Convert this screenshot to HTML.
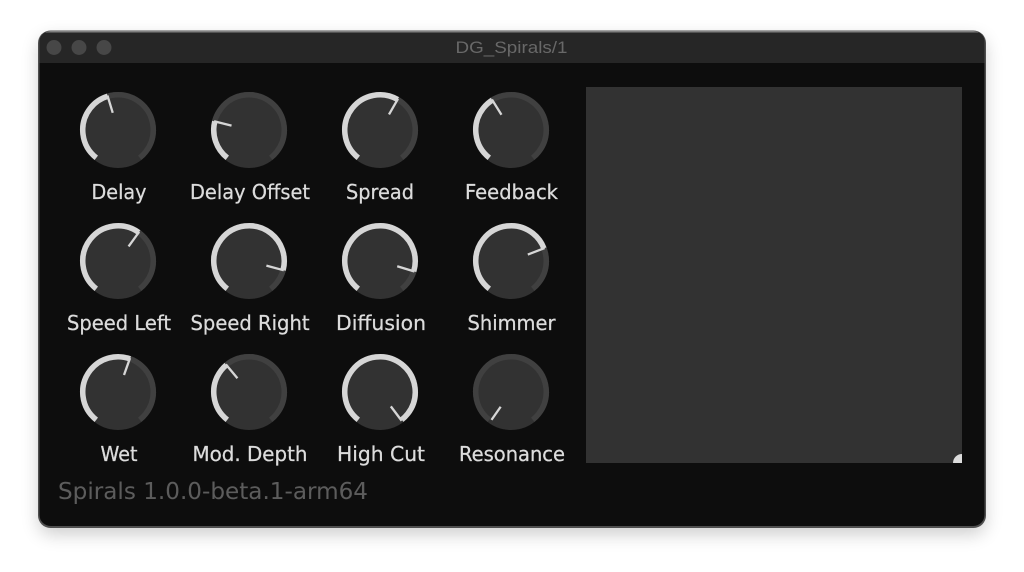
<!DOCTYPE html>
<html>
<head>
<meta charset="utf-8">
<style>
html,body{margin:0;padding:0;background:#fff;width:1024px;height:572px;overflow:hidden}
svg{display:block}
.b{fill:#323232}
.t,.v{fill:none;stroke-width:5.5}
.t{stroke:#404040;stroke-dasharray:284 76}
.v{stroke:#d6d6d6}
.p{stroke:#d6d6d6;stroke-width:2.3}
.l{font-family:"DejaVu Sans",sans-serif;font-size:20px;fill:#dcdcdc;stroke:#dcdcdc;stroke-width:.25;text-anchor:middle}
</style>
</head>
<body>
<svg width="1024" height="572" viewBox="0 0 1024 572" xmlns="http://www.w3.org/2000/svg">
<defs>
<filter id="s" x="-10%" y="-15%" width="120%" height="130%"><feGaussianBlur stdDeviation="9"/></filter>
<filter id="soft" x="-2%" y="-2%" width="104%" height="104%"><feGaussianBlur stdDeviation="0.35"/></filter>
<clipPath id="win"><rect x="39.500" y="31" width="945" height="495" rx="11"/></clipPath>
<clipPath id="panel"><rect x="586" y="87" width="376" height="376"/></clipPath>
</defs>
<rect x="39" y="38" width="946" height="496" rx="12" fill="#000" opacity=".2" filter="url(#s)"/>
<g filter="url(#soft)">
<rect x="38" y="30.500" width="948" height="497.500" rx="12.500" fill="#505050"/>
<g clip-path="url(#win)">
<rect x="39" y="31" width="946" height="496" fill="#111"/>
<rect x="39" y="32" width="946" height="32" fill="#262626"/>
<rect x="39" y="31" width="946" height="1.500" fill="#808080"/>
<rect x="39" y="63" width="946" height="2" fill="#0a0a0a"/>
</g>
<circle cx="54" cy="47.500" r="7.500" fill="#464646"/>
<circle cx="79" cy="47.500" r="7.500" fill="#464646"/>
<circle cx="104" cy="47.500" r="7.500" fill="#464646"/>
<text x="511.500" y="53" font-family="'Liberation Sans',sans-serif" font-size="16.500" fill="#686868" text-anchor="middle" textLength="112" lengthAdjust="spacingAndGlyphs">DG_Spirals/1</text>

<rect x="586" y="87" width="376" height="376" fill="#333"/>
<circle cx="962" cy="463" r="9" fill="#dcdcdc" clip-path="url(#panel)"/>

<g transform="translate(118 130)"><circle class="b" r="38"/><circle class="t" r="35.250" pathLength="360" transform="rotate(-232)"/><circle class="v" r="35.250" pathLength="360" stroke-dasharray="125 360" transform="rotate(-232)"/><line class="p" y1="-36" y2="-18" transform="rotate(-17)"/></g>
<g transform="translate(249 130)"><circle class="b" r="38"/><circle class="t" r="35.250" pathLength="360" transform="rotate(-232)"/><circle class="v" r="35.250" pathLength="360" stroke-dasharray="66 360" transform="rotate(-232)"/><line class="p" y1="-36" y2="-18" transform="rotate(-76)"/></g>
<g transform="translate(380 130)"><circle class="b" r="38"/><circle class="t" r="35.250" pathLength="360" transform="rotate(-232)"/><circle class="v" r="35.250" pathLength="360" stroke-dasharray="172 360" transform="rotate(-232)"/><line class="p" y1="-36" y2="-18" transform="rotate(30)"/></g>
<g transform="translate(511 130)"><circle class="b" r="38"/><circle class="t" r="35.250" pathLength="360" transform="rotate(-232)"/><circle class="v" r="35.250" pathLength="360" stroke-dasharray="110 360" transform="rotate(-232)"/><line class="p" y1="-36" y2="-18" transform="rotate(-32)"/></g>

<g transform="translate(118 261)"><circle class="b" r="38"/><circle class="t" r="35.250" pathLength="360" transform="rotate(-232)"/><circle class="v" r="35.250" pathLength="360" stroke-dasharray="178 360" transform="rotate(-232)"/><line class="p" y1="-36" y2="-18" transform="rotate(36)"/></g>
<g transform="translate(249 261)"><circle class="b" r="38"/><circle class="t" r="35.250" pathLength="360" transform="rotate(-232)"/><circle class="v" r="35.250" pathLength="360" stroke-dasharray="247 360" transform="rotate(-232)"/><line class="p" y1="-36" y2="-18" transform="rotate(105)"/></g>
<g transform="translate(380 261)"><circle class="b" r="38"/><circle class="t" r="35.250" pathLength="360" transform="rotate(-232)"/><circle class="v" r="35.250" pathLength="360" stroke-dasharray="249 360" transform="rotate(-232)"/><line class="p" y1="-36" y2="-18" transform="rotate(107)"/></g>
<g transform="translate(511 261)"><circle class="b" r="38"/><circle class="t" r="35.250" pathLength="360" transform="rotate(-232)"/><circle class="v" r="35.250" pathLength="360" stroke-dasharray="211 360" transform="rotate(-232)"/><line class="p" y1="-36" y2="-18" transform="rotate(69)"/></g>

<g transform="translate(118 392)"><circle class="b" r="38"/><circle class="t" r="35.250" pathLength="360" transform="rotate(-232)"/><circle class="v" r="35.250" pathLength="360" stroke-dasharray="162 360" transform="rotate(-232)"/><line class="p" y1="-36" y2="-18" transform="rotate(19.500)"/></g>
<g transform="translate(249 392)"><circle class="b" r="38"/><circle class="t" r="35.250" pathLength="360" transform="rotate(-232)"/><circle class="v" r="35.250" pathLength="360" stroke-dasharray="102 360" transform="rotate(-232)"/><line class="p" y1="-36" y2="-18" transform="rotate(-40)"/></g>
<g transform="translate(380 392)"><circle class="b" r="38"/><circle class="t" r="35.250" pathLength="360" transform="rotate(-232)"/><circle class="v" r="35.250" pathLength="360" stroke-dasharray="284 360" transform="rotate(-232)"/><line class="p" y1="-36" y2="-18" transform="rotate(143)"/></g>
<g transform="translate(511 392)"><circle class="b" r="38"/><circle class="t" r="35.250" pathLength="360" transform="rotate(-232)"/><line class="p" y1="-34" y2="-18" transform="rotate(-145)"/></g>

<text class="l" x="119" y="199" textLength="55" lengthAdjust="spacingAndGlyphs">Delay</text>
<text class="l" x="250" y="199" textLength="120" lengthAdjust="spacingAndGlyphs">Delay Offset</text>
<text class="l" x="380" y="199" textLength="68" lengthAdjust="spacingAndGlyphs">Spread</text>
<text class="l" x="511.500" y="199" textLength="93" lengthAdjust="spacingAndGlyphs">Feedback</text>
<text class="l" x="119" y="330" textLength="104" lengthAdjust="spacingAndGlyphs">Speed Left</text>
<text class="l" x="250" y="330" textLength="119" lengthAdjust="spacingAndGlyphs">Speed Right</text>
<text class="l" x="381" y="330" textLength="90" lengthAdjust="spacingAndGlyphs">Diffusion</text>
<text class="l" x="511.500" y="330" textLength="88" lengthAdjust="spacingAndGlyphs">Shimmer</text>
<text class="l" x="119" y="461" textLength="37" lengthAdjust="spacingAndGlyphs">Wet</text>
<text class="l" x="250" y="461" textLength="115" lengthAdjust="spacingAndGlyphs">Mod. Depth</text>
<text class="l" x="381" y="461" textLength="88" lengthAdjust="spacingAndGlyphs">High Cut</text>
<text class="l" x="512" y="461" textLength="106" lengthAdjust="spacingAndGlyphs">Resonance</text>

<text x="58" y="499" font-family="'DejaVu Sans',sans-serif" font-size="23px" fill="#5c5c5c" textLength="310" lengthAdjust="spacingAndGlyphs">Spirals 1.0.0-beta.1-arm64</text>
</g>
</svg>
</body>
</html>
